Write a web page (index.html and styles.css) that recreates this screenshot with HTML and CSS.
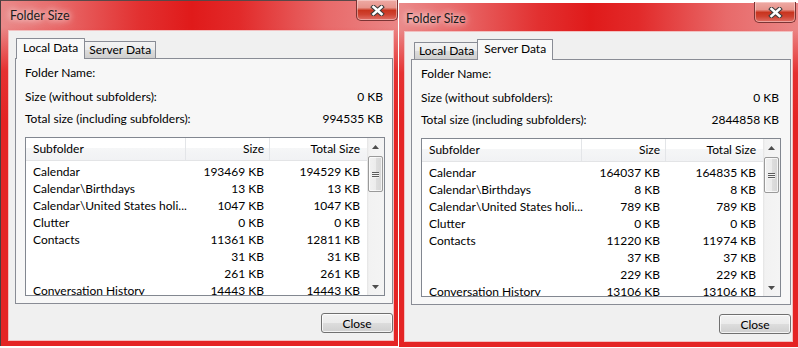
FILE: index.html
```html
<!DOCTYPE html>
<html>
<head>
<meta charset="utf-8">
<title>Folder Size</title>
<link rel="stylesheet" href="styles.css">
</head>
<body>
<div class="screen">
  <div class="dialog dialog-left">
    <div class="titlebar"><span class="title">Folder Size</span></div>
    <div class="caption-close"><svg width="15" height="11" viewBox="0 0 15 11"><path d="M3.5 2 L11.5 9 M11.5 2 L3.5 9" stroke="#3c3c3c" stroke-width="4.6" stroke-linecap="square" fill="none"/><path d="M3.5 2 L11.5 9 M11.5 2 L3.5 9" stroke="#ffffff" stroke-width="2.6" stroke-linecap="square" fill="none"/></svg></div>
    <div class="client">
      <div class="tabs">
        <div class="tab tab-local active">Local Data</div>
        <div class="tab tab-server">Server Data</div>
      </div>
      <div class="panel">
        <div class="info-row r1"><span>Folder Name:</span></div>
        <div class="info-row r2"><span>Size (without subfolders):</span><span>0 KB</span></div>
        <div class="info-row r3"><span>Total size (including subfolders):</span><span>994535 KB</span></div>
        <div class="list">
          <div class="list-main">
            <div class="list-head row"><div class="c1">Subfolder</div><div class="c2">Size</div><div class="c3">Total Size</div></div>
            <div class="list-body">
              <div class="row"><div class="c1">Calendar</div><div class="c2">193469 KB</div><div class="c3">194529 KB</div></div>
              <div class="row"><div class="c1">Calendar\Birthdays</div><div class="c2">13 KB</div><div class="c3">13 KB</div></div>
              <div class="row"><div class="c1">Calendar\United States holi...</div><div class="c2">1047 KB</div><div class="c3">1047 KB</div></div>
              <div class="row"><div class="c1">Clutter</div><div class="c2">0 KB</div><div class="c3">0 KB</div></div>
              <div class="row"><div class="c1">Contacts</div><div class="c2">11361 KB</div><div class="c3">12811 KB</div></div>
              <div class="row"><div class="c1"></div><div class="c2">31 KB</div><div class="c3">31 KB</div></div>
              <div class="row"><div class="c1"></div><div class="c2">261 KB</div><div class="c3">261 KB</div></div>
              <div class="row"><div class="c1">Conversation History</div><div class="c2">14443 KB</div><div class="c3">14443 KB</div></div>
            </div>
          </div>
          <div class="vscroll">
            <div class="sb-btn"><svg width="7" height="4" viewBox="0 0 7 4"><path d="M0 4 L3.5 0 L7 4 Z" fill="#4d4d4d"/></svg></div>
            <div class="sb-track">
              <div class="sb-thumb"><span class="grip"></span><span class="grip"></span><span class="grip"></span></div>
            </div>
            <div class="sb-btn"><svg width="7" height="4" viewBox="0 0 7 4"><path d="M0 0 L7 0 L3.5 4 Z" fill="#4d4d4d"/></svg></div>
          </div>
        </div>
      </div>
      <div class="footer"><button class="btn">Close</button></div>
    </div>
  </div>

  <div class="dialog dialog-right">
    <div class="titlebar"><span class="title">Folder Size</span></div>
    <div class="caption-close"><svg width="15" height="11" viewBox="0 0 15 11"><path d="M3.5 2 L11.5 9 M11.5 2 L3.5 9" stroke="#3c3c3c" stroke-width="4.6" stroke-linecap="square" fill="none"/><path d="M3.5 2 L11.5 9 M11.5 2 L3.5 9" stroke="#ffffff" stroke-width="2.6" stroke-linecap="square" fill="none"/></svg></div>
    <div class="client">
      <div class="tabs">
        <div class="tab tab-local">Local Data</div>
        <div class="tab tab-server active">Server Data</div>
      </div>
      <div class="panel">
        <div class="info-row r1"><span>Folder Name:</span></div>
        <div class="info-row r2"><span>Size (without subfolders):</span><span>0 KB</span></div>
        <div class="info-row r3"><span>Total size (including subfolders):</span><span>2844858 KB</span></div>
        <div class="list">
          <div class="list-main">
            <div class="list-head row"><div class="c1">Subfolder</div><div class="c2">Size</div><div class="c3">Total Size</div></div>
            <div class="list-body">
              <div class="row"><div class="c1">Calendar</div><div class="c2">164037 KB</div><div class="c3">164835 KB</div></div>
              <div class="row"><div class="c1">Calendar\Birthdays</div><div class="c2">8 KB</div><div class="c3">8 KB</div></div>
              <div class="row"><div class="c1">Calendar\United States holi...</div><div class="c2">789 KB</div><div class="c3">789 KB</div></div>
              <div class="row"><div class="c1">Clutter</div><div class="c2">0 KB</div><div class="c3">0 KB</div></div>
              <div class="row"><div class="c1">Contacts</div><div class="c2">11220 KB</div><div class="c3">11974 KB</div></div>
              <div class="row"><div class="c1"></div><div class="c2">37 KB</div><div class="c3">37 KB</div></div>
              <div class="row"><div class="c1"></div><div class="c2">229 KB</div><div class="c3">229 KB</div></div>
              <div class="row"><div class="c1">Conversation History</div><div class="c2">13106 KB</div><div class="c3">13106 KB</div></div>
            </div>
          </div>
          <div class="vscroll">
            <div class="sb-btn"><svg width="7" height="4" viewBox="0 0 7 4"><path d="M0 4 L3.5 0 L7 4 Z" fill="#4d4d4d"/></svg></div>
            <div class="sb-track">
              <div class="sb-thumb"><span class="grip"></span><span class="grip"></span><span class="grip"></span></div>
            </div>
            <div class="sb-btn"><svg width="7" height="4" viewBox="0 0 7 4"><path d="M0 0 L7 0 L3.5 4 Z" fill="#4d4d4d"/></svg></div>
          </div>
        </div>
      </div>
      <div class="footer"><button class="btn">Close</button></div>
    </div>
  </div>
</div>
</body>
</html>
```

FILE: styles.css
```css
* { box-sizing: border-box; }
html, body { margin: 0; padding: 0; }
body {
  width: 798px;
  height: 348px;
  overflow: hidden;
  background: #ffffff;
  font-family: "Segoe UI", Lato, "Noto Sans", sans-serif;
  font-size: 12px;
  color: #000;
}
.screen {
  display: flex;
  align-items: flex-start;
}

/* ---------- window frame ---------- */
.dialog {
  position: relative;
  display: flex;
  flex-direction: column;
  background:
    linear-gradient(180deg, rgba(228, 34, 34, 0) 0px, rgba(228, 34, 34, 0) 26px, rgba(228, 34, 34, 0.85) 70px, #e42424 120px),
    linear-gradient(90deg, #ea8a8a 0%, #e86868 15%, #e23030 35%, #e01a1a 48%, #e22a2a 60%, #e86a6a 82%, #eb8686 100%);
}
.dialog-left {
  width: 398px;
  height: 346px;
  padding: 0 4px 5px 7px;
  border-top: 1px solid #5a4848;
  border-left: 1px solid #4a3c3c;
}
.dialog-right {
  width: 399px;
  height: 344px;
  margin: 3px 0 0 1px;
  padding: 0 5px 5px 5px;
}
.titlebar {
  height: 29px;
  display: flex;
  align-items: center;
  padding-left: 2px;
  flex: none;
}
.dialog-right .titlebar { height: 28px; padding-top: 2px; }
.title {
  font-size: 12.5px;
  color: #1c1c1c;
  text-shadow: 0 0 6px rgba(255, 255, 255, 0.9), 0 0 10px rgba(255, 255, 255, 0.7);
}
.caption-close {
  position: absolute;
  top: -1px;
  right: 0;
  width: 42px;
  height: 21px;
  border: 1px solid #7b3434;
  border-top: none;
  border-radius: 0 0 5px 5px;
  background: linear-gradient(180deg, #eeaaa4 0%, #e7948c 38%, #c8341e 52%, #cf4230 72%, #e07068 100%);
  box-shadow: inset 0 0 0 1px rgba(255, 230, 230, 0.45);
  display: flex;
  align-items: center;
  justify-content: center;
}
.dialog-right .caption-close { right: 2px; top: -1px; }

/* ---------- client ---------- */
.client {
  flex: 1;
  display: flex;
  flex-direction: column;
  background: #f0f0f0;
  border: 1px solid #f2c0c0;
  padding: 7px 0 0 6px;
}
.dialog-right .client { padding-right: 1px; }

.tabs {
  display: flex;
  align-items: flex-end;
  height: 20px;
  padding-left: 3px;
  flex: none;
}
.tab {
  height: 17px;
  line-height: 15px;
  padding: 0 4px;
  border: 1px solid #898c95;
  border-bottom: none;
  border-radius: 1px 1px 0 0;
  background: linear-gradient(180deg, #f3f3f3 0%, #ebebeb 50%, #dddddd 51%, #cfcfcf 100%);
  white-space: nowrap;
}
.tab + .tab { margin-left: -1px; }
.tab.active {
  position: relative;
  z-index: 1;
  height: 21px;
  line-height: 17px;
  margin: 0 -2px -1px -2px;
  padding: 0 6px;
  background: #f9f9f9;
}
.tab.active + .tab { margin-left: 1px; }

.panel {
  height: 246px;
  border: 1px solid #898c95;
  background: #f7f7f7;
  padding: 6px 0 0 9px;
  flex: none;
}
.info-row {
  width: 358px;
  height: 16px;
  line-height: 16px;
  display: flex;
  justify-content: space-between;
  white-space: nowrap;
}
.info-row.r2 { margin-top: 8px; }
.info-row.r3 { margin-top: 6px; }

/* ---------- list view ---------- */
.list {
  margin-top: 10px;
  width: 360px;
  height: 159px;
  border: 1px solid #828790;
  background: #fff;
  display: flex;
}
.list-main {
  flex: 1;
  display: flex;
  flex-direction: column;
  overflow: hidden;
}
.row {
  display: grid;
  grid-template-columns: 160px 84px 1fr;
  height: 17px;
  line-height: 17px;
  white-space: nowrap;
}
.c1 { padding-left: 7px; }
.c2 { text-align: right; padding-right: 6px; }
.c3 { text-align: right; padding-right: 7px; }
.list-head {
  height: 23px;
  line-height: 21px;
  flex: none;
  background: linear-gradient(180deg, #ffffff 0%, #ffffff 45%, #f5f6f7 46%, #f1f2f4 100%);
  border-bottom: 1px solid #e3e4e6;
}
.list-head .c1, .list-head .c2 { border-right: 1px solid #e3e5e8; }
.list-head .c2 { padding-right: 5px; }
.list-body { padding-top: 2px; }

/* ---------- scrollbar ---------- */
.vscroll {
  width: 17px;
  flex: none;
  display: flex;
  flex-direction: column;
  background: linear-gradient(90deg, #e4e4e4 0px, #f2f2f2 2px, #f4f4f4 100%);
}
.sb-btn {
  height: 17px;
  display: flex;
  align-items: center;
  justify-content: center;
  flex: none;
}
.sb-track {
  flex: 1;
  padding: 1px 1px 0 1px;
}
.sb-thumb {
  height: 36px;
  border: 1px solid #9a9a9a;
  border-radius: 2px;
  background: linear-gradient(90deg, #f1f1f1 0%, #ececec 50%, #dedede 51%, #d6d6d6 100%);
  box-shadow: inset 0 0 0 1px rgba(255, 255, 255, 0.7);
  display: flex;
  flex-direction: column;
  align-items: center;
  justify-content: center;
  gap: 1px;
}
.grip {
  display: block;
  width: 7px;
  height: 1px;
  background: #5c5c5c;
  box-shadow: 0 1px 0 #f4f4f4;
}

/* ---------- footer ---------- */
.footer {
  display: flex;
  justify-content: flex-end;
  margin-top: 9px;
  flex: none;
}
.btn {
  width: 72px;
  height: 20px;
  font-family: inherit;
  font-size: 12px;
  color: #000;
  border: 1px solid #707070;
  border-radius: 3px;
  background: linear-gradient(180deg, #f2f2f2 0%, #ebebeb 48%, #dddddd 50%, #cfcfcf 100%);
  box-shadow: inset 0 0 0 1px rgba(255, 255, 255, 0.75);
  padding: 0;
}
```
